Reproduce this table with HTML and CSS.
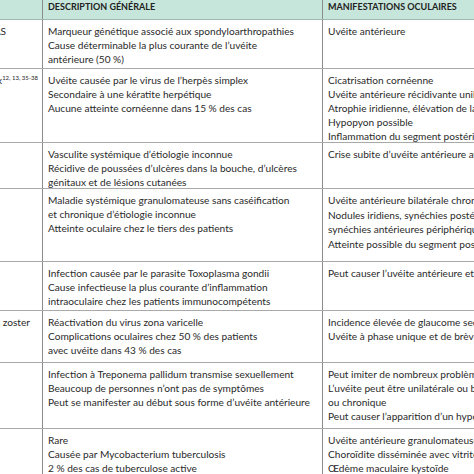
FILE: index.html
```html
<!DOCTYPE html>
<html lang="fr">
<head>
<meta charset="utf-8">
<link rel="stylesheet" href="styles.css">
</head>
<body>
<div class="table">
  <div class="row head">
    <div class="cell c1"></div>
    <div class="cell c2">DESCRIPTION GÉNÉRALE</div>
    <div class="cell c3">MANIFESTATIONS OCULAIRES</div>
  </div>
  <div class="row r1">
    <div class="cell c1"><span class="lead end-s">HLA-B27 / AS</span></div>
    <div class="cell c2">
      <p>Marqueur génétique associé aux spondyloarthropathies</p>
      <p>Cause déterminable la plus courante de l’uvéite</p>
      <p>antérieure (50 %)</p>
    </div>
    <div class="cell c3">
      <p>Uvéite antérieure</p>
    </div>
  </div>
  <div class="row r2">
    <div class="cell c1"><span class="lead end-x">Herpès simplex<sup>12, 13, 35-38</sup></span></div>
    <div class="cell c2">
      <p>Uvéite causée par le virus de l’herpès simplex</p>
      <p>Secondaire à une kératite herpétique</p>
      <p>Aucune atteinte cornéenne dans 15 % des cas</p>
    </div>
    <div class="cell c3">
      <p>Cicatrisation cornéenne</p>
      <p>Uvéite antérieure récidivante unilatérale</p>
      <p>Atrophie iridienne, élévation de la pression intraoculaire</p>
      <p>Hypopyon possible</p>
      <p>Inflammation du segment postérieur</p>
    </div>
  </div>
  <div class="row r3">
    <div class="cell c1"></div>
    <div class="cell c2">
      <p>Vasculite systémique d’étiologie inconnue</p>
      <p>Récidive de poussées d’ulcères dans la bouche, d’ulcères</p>
      <p>génitaux et de lésions cutanées</p>
    </div>
    <div class="cell c3">
      <p>Crise subite d’uvéite antérieure avec hypopyon</p>
    </div>
  </div>
  <div class="row r4">
    <div class="cell c1"></div>
    <div class="cell c2">
      <p>Maladie systémique granulomateuse sans caséification</p>
      <p>et chronique d’étiologie inconnue</p>
      <p>Atteinte oculaire chez le tiers des patients</p>
    </div>
    <div class="cell c3">
      <p class="gap">Uvéite antérieure bilatérale chronique</p>
      <p>Nodules iridiens, synéchies postérieures,</p>
      <p class="gap">synéchies antérieures périphériques</p>
      <p>Atteinte possible du segment postérieur</p>
    </div>
  </div>
  <div class="row r5">
    <div class="cell c1"></div>
    <div class="cell c2">
      <p>Infection causée par le parasite Toxoplasma gondii</p>
      <p>Cause infectieuse la plus courante d’inflammation</p>
      <p>intraoculaire chez les patients immunocompétents</p>
    </div>
    <div class="cell c3">
      <p>Peut causer l’uvéite antérieure et postérieure</p>
    </div>
  </div>
  <div class="row r6">
    <div class="cell c1"><span class="lead end-z">Herpès zoster</span></div>
    <div class="cell c2">
      <p>Réactivation du virus zona varicelle</p>
      <p>Complications oculaires chez 50 % des patients</p>
      <p>avec uvéite dans 43 % des cas</p>
    </div>
    <div class="cell c3">
      <p>Incidence élevée de glaucome secondaire</p>
      <p>Uvéite à phase unique et de brève durée</p>
    </div>
  </div>
  <div class="row r7">
    <div class="cell c1"></div>
    <div class="cell c2">
      <p>Infection à Treponema pallidum transmise sexuellement</p>
      <p>Beaucoup de personnes n’ont pas de symptômes</p>
      <p>Peut se manifester au début sous forme d’uvéite antérieure</p>
    </div>
    <div class="cell c3">
      <p>Peut imiter de nombreux problèmes</p>
      <p>L’uvéite peut être unilatérale ou bilatérale, aiguë</p>
      <p>ou chronique</p>
      <p>Peut causer l’apparition d’un hypopyon</p>
    </div>
  </div>
  <div class="row r8">
    <div class="cell c1"></div>
    <div class="cell c2">
      <p>Rare</p>
      <p>Causée par Mycobacterium tuberculosis</p>
      <p>2 % des cas de tuberculose active</p>
    </div>
    <div class="cell c3">
      <p>Uvéite antérieure granulomateuse</p>
      <p>Choroïdite disséminée avec vitrite</p>
      <p>Œdème maculaire kystoïde</p>
    </div>
  </div>
</div>
</body>
</html>
```

FILE: styles.css
```css
html, body {
  margin: 0;
  padding: 0;
  background: #ffffff;
}
body {
  width: 474px;
  height: 474px;
  overflow: hidden;
  font-family: Lato, "Liberation Sans", sans-serif;
  color: #2a2a2a;
}
.table {
  width: 640px;
}
.row {
  box-sizing: border-box;
  display: grid;
  grid-template-columns: 43px 280px 317px;
  border-bottom: 1px solid #a9a9a9;
}
.cell {
  box-sizing: border-box;
  padding: 4px 0 0 5px;
  font-size: 10.15px;
  line-height: 14px;
  white-space: nowrap;
  overflow: hidden;
}
.c1, .c2 {
  border-right: 1px solid #8c8c8c;
}
.c1 {
  padding-left: 0;
  display: flex;
  justify-content: flex-end;
  align-items: flex-start;
}
.cell p {
  margin: 0;
}
.cell p.gap {
  margin-bottom: 1px;
}
.head {
  background: #c7e6db;
  border-bottom: 1px solid #9fb8b0;
}
.head .cell {
  padding: 1px 0 0 5px;
  font-size: 9px;
  line-height: 12px;
  font-weight: 700;
  color: #222;
}
.lead {
  flex: none;
}
.lead sup {
  font-size: 6px;
  vertical-align: 4px;
  line-height: 0;
}
.end-s { margin-right: 36px; }
.end-x { margin-right: 4px; }
.end-z { margin-right: 12px; }
.head { height: 20px; }
.r1 { height: 49px; }
.r2 { height: 74px; }
.r3 { height: 46px; }
.r4 { height: 73px; }
.r5 { height: 49px; }
.r6 { height: 52px; }
.r7 { height: 66px; }
.r8 { height: 60px; }
```
